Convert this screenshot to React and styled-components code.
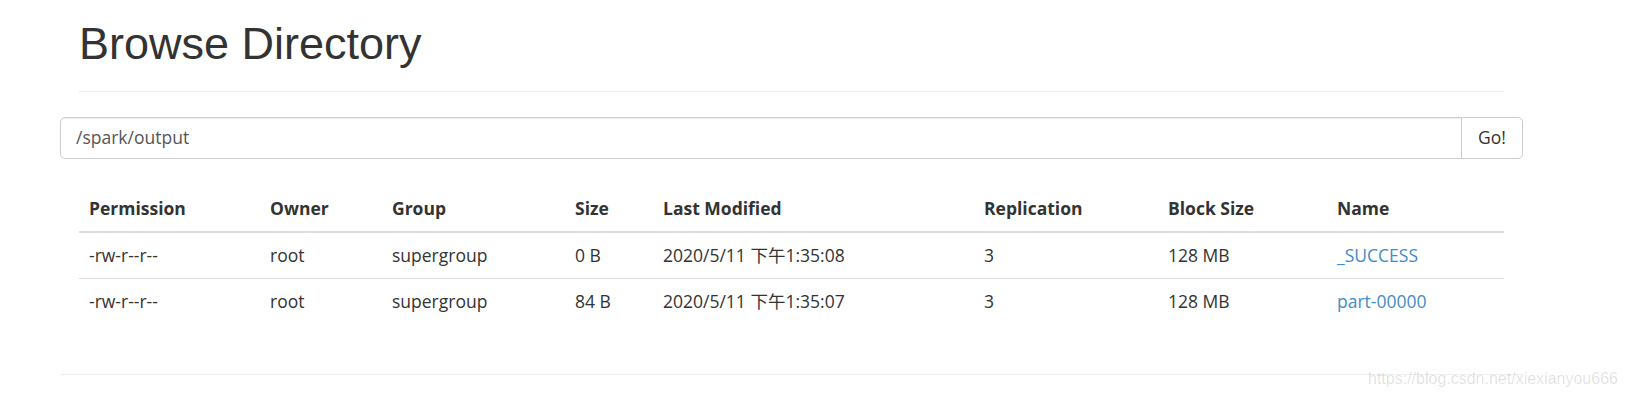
import styled, { createGlobalStyle } from 'styled-components'

const GlobalStyle = createGlobalStyle`
    html, body {
        margin: 0;
        padding: 0;
        background: #fff;
    }
    body {
        font-family: "Open Sans", "Noto Sans CJK SC", sans-serif;
        font-size: 17.5px;
        color: #333;
    }
`

const Page = styled.div`
    position: relative;
    width: 1626px;
    height: 398px;
    overflow: hidden;
`

const Container = styled.div`
    width: 1425px;
    margin-left: 79px;
    padding-top: 19px;
`

const PageHeader = styled.div`
    padding-bottom: 22px;
    border-bottom: 1px solid #eee;
    margin-bottom: 25px;
`

const Title = styled.h1`
    margin: 0;
    font-family: "Liberation Sans", Arial, sans-serif;
    font-weight: 400;
    font-size: 45px;
    line-height: 49.5px;
    color: #333;
`

const Row = styled.div`
    margin: 0 -19px;
`

const InputGroup = styled.form`
    display: flex;
    height: 42px;
`

const PathInput = styled.input`
    flex: 1;
    box-sizing: border-box;
    height: 42px;
    padding: 0 15px 2px;
    font-family: "Open Sans", "Noto Sans CJK SC", sans-serif;
    font-size: 17.5px;
    color: #555;
    border: 1px solid #ccc;
    border-radius: 5px 0 0 5px;
    box-shadow: inset 0 1px 1px rgba(0, 0, 0, 0.075);
    outline: none;
`

const GoButton = styled.button`
    box-sizing: border-box;
    width: 62px;
    height: 42px;
    margin-left: -1px;
    padding: 0 0 2px;
    background: #fff;
    border: 1px solid #ccc;
    border-radius: 0 5px 5px 0;
    font-family: "Open Sans", "Noto Sans CJK SC", sans-serif;
    font-size: 17.5px;
    color: #333;
`

const Table = styled.table`
    width: 1425px;
    margin-top: 27px;
    border-collapse: collapse;
    table-layout: fixed;
`

const Th = styled.th`
    box-sizing: border-box;
    width: ${p => p.$w}px;
    padding: 10px 10px;
    height: 45px;
    line-height: 25px;
    text-align: left;
    font-weight: 700;
    border-bottom: 2.5px solid #ddd;
    white-space: nowrap;
`

const Td = styled.td`
    padding: 10px 10px;
    height: 25px;
    line-height: 25px;
    border-bottom: 1px solid #ddd;
    white-space: nowrap;
`

const LastRow = styled.tr`
    td {
        border-bottom: none;
    }
`

const FileLink = styled.a`
    color: #428bca;
    text-decoration: none;
`

const Rule = styled.hr`
    margin: 50px 0 0;
    border: 0;
    border-top: 1px solid #eee;
`

const Watermark = styled.div`
    position: absolute;
    left: 1368px;
    top: 370px;
    font-family: "Liberation Sans", Arial, sans-serif;
    font-size: 16px;
    color: rgba(0, 0, 0, 0.13);
    white-space: nowrap;
`

const columns = [
    ['Permission', 181],
    ['Owner', 122],
    ['Group', 183],
    ['Size', 88],
    ['Last Modified', 321],
    ['Replication', 184],
    ['Block Size', 169],
    ['Name', 177],
]

const files = [
    ['-rw-r--r--', 'root', 'supergroup', '0 B', '2020/5/11 下午1:35:08', '3', '128 MB', '_SUCCESS'],
    ['-rw-r--r--', 'root', 'supergroup', '84 B', '2020/5/11 下午1:35:07', '3', '128 MB', 'part-00000'],
]

function FileRow({ file, last }) {
    const Tr = last ? LastRow : 'tr'
    return (
        <Tr>
            {file.slice(0, 7).map((v, i) => <Td key={i}>{v}</Td>)}
            <Td><FileLink href="#">{file[7]}</FileLink></Td>
        </Tr>
    )
}

export default function App() {
    return (
        <Page>
            <GlobalStyle />
            <Container>
                <PageHeader>
                    <Title>Browse Directory</Title>
                </PageHeader>
                <Row>
                    <InputGroup onSubmit={e => e.preventDefault()}>
                        <PathInput type="text" defaultValue="/spark/output" />
                        <GoButton type="submit">Go!</GoButton>
                    </InputGroup>
                </Row>
                <Table>
                    <thead>
                        <tr>
                            {columns.map(([label, w]) => <Th key={label} $w={w}>{label}</Th>)}
                        </tr>
                    </thead>
                    <tbody>
                        {files.map((f, i) => <FileRow key={i} file={f} last={i === files.length - 1} />)}
                    </tbody>
                </Table>
                <Row>
                    <Rule />
                </Row>
            </Container>
            <Watermark>https://blog.csdn.net/xiexianyou666</Watermark>
        </Page>
    )
}
